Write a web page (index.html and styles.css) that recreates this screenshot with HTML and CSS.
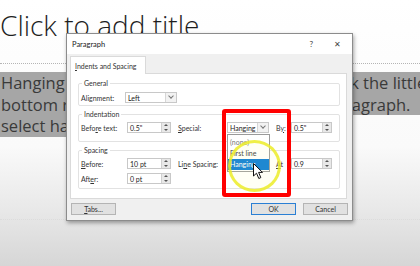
FILE: index.html
```html
<!DOCTYPE html>
<html lang="en">
<head>
  <meta charset="UTF-8">
  <title>Paragraph</title>
  <link rel="stylesheet" href="styles.css">
</head>
<body>
  <!-- slide behind the dialog -->
  <div class="slide">
    <div class="title-ph">
      <h1 class="title">Click to add title</h1>
    </div>
    <div class="body-ph">
      <div class="line full">
        <span class="seg-left">Hanging indent lets a list line up when you</span>
        <span class="seg-right">click the little</span>
      </div>
      <div class="line full">
        <span class="seg-left">bottom right arrow of the group called</span>
        <span class="seg-right">Paragraph.</span>
      </div>
      <div class="line short">select hanging from the special box.</div>
    </div>
  </div>

  <!-- Paragraph dialog -->
  <div class="dialog">
    <div class="titlebar">
      <span class="dlg-title">Paragraph</span>
      <span class="tb-btn">?</span>
      <span class="tb-btn close">✕</span>
    </div>

    <div class="tabs">
      <div class="tab active"><u>I</u>ndents and Spacing</div>
    </div>

    <div class="panel">
      <div class="group">
        <div class="legend">General</div>
        <div class="row row-align">
          <span class="lbl">Ali<u>g</u>nment:</span>
          <div class="combo wide"><span>Left</span><i class="arrow"></i></div>
        </div>
      </div>

      <div class="group mid">
        <div class="legend">Indentation</div>
        <div class="row">
          <span class="lbl">Befo<u>r</u>e text:</span>
          <div class="spin"><span>0.5"</span><i class="spinner"></i></div>
          <span class="lbl pad"><u>S</u>pecial:</span>
          <div class="combo"><span>Hanging</span><i class="arrow"></i></div>
          <span class="lbl pad">B<u>y</u>:</span>
          <div class="spin"><span>0.5"</span><i class="spinner"></i></div>
        </div>
      </div>

      <div class="group last">
        <div class="legend">Spacing</div>
        <div class="row">
          <span class="lbl"><u>B</u>efore:</span>
          <div class="spin"><span>10 pt</span><i class="spinner"></i></div>
          <span class="lbl pad">Li<u>n</u>e Spacing:</span>
          <div class="combo"><span>Multiple</span><i class="arrow"></i></div>
          <span class="lbl pad"><u>A</u>t</span>
          <div class="spin"><span>0.9</span><i class="spinner"></i></div>
        </div>
        <div class="row">
          <span class="lbl">Aft<u>e</u>r:</span>
          <div class="spin"><span>0 pt</span><i class="spinner"></i></div>
        </div>
      </div>
    </div>

    <div class="footer">
      <button class="btn"><u>T</u>abs...</button>
      <span class="spacer"></span>
      <button class="btn default">OK</button>
      <button class="btn">Cancel</button>
    </div>

    <!-- open list of the Special combo -->
    <ul class="droplist">
      <li class="muted">(none)</li>
      <li>First line</li>
      <li class="selected">Hanging</li>
    </ul>
  </div>

  <!-- video annotations -->
  <div class="mark-box"></div>
  <div class="mark-ring"></div>
  <svg class="cursor" width="11" height="17" viewBox="0 0 11 17">
    <path d="M0.5 0.5 L0.5 13 L3.5 10.2 L5.8 15.5 L7.8 14.6 L5.6 9.4 L9.5 9.4 Z" fill="#fff" stroke="#111" stroke-width="1" stroke-linejoin="round"/>
  </svg>
</body>
</html>
```

FILE: styles.css
```css
* {
  box-sizing: border-box;
}

body {
  margin: 0;
  width: 420px;
  height: 266px;
  overflow: hidden;
  position: relative;
  font-family: "Open Sans", "Noto Sans", sans-serif;
  color: #222;
}

/* slide */
.slide {
  height: 266px;
  background: linear-gradient(to bottom, #ffffff 0, #fafafa 55%, #e9e9e9 78%, #d6d6d6 100%);
}

.title-ph {
  height: 64px;
  padding-top: 10px;
  border-bottom: 1px dotted #b5b5b5;
}

.title {
  margin: 0;
  font-size: 28px;
  font-weight: 300;
  line-height: 31px;
  color: #1e1e1e;
  white-space: nowrap;
}

.body-ph {
  height: 156px;
  padding-top: 8px;
  border-bottom: 1px dotted #dcdcdc;
}

.line {
  font-size: 16.5px;
  line-height: 21.5px;
  white-space: nowrap;
  overflow: hidden;
  background: #a6a6a6;
  color: #3a3a3a;
  padding-left: 1px;
}

.line.full {
  display: flex;
}

.line.short {
  width: 200px;
}

.seg-left {
  flex: 0 0 325px;
  overflow: hidden;
}

/* dialog window */
.dialog {
  position: absolute;
  left: 66px;
  top: 33px;
  width: 287px;
  height: 188px;
  background: #f0f0f0;
  border: 1px solid #8c8c8c;
  box-shadow: 1px 2px 4px rgba(0, 0, 0, 0.35);
  font-family: Lato, "Noto Sans", sans-serif;
  font-size: 7px;
  color: #333;
  display: flex;
  flex-direction: column;
}

.titlebar {
  height: 20px;
  background: #fff;
  display: flex;
  align-items: center;
  padding: 0 11px 0 5px;
  gap: 21px;
}

.dlg-title {
  flex: 1;
  font-size: 7.5px;
  color: #222;
}

.tb-btn {
  font-size: 8px;
  color: #444;
}

.tabs {
  display: flex;
  padding: 1px 0 0 3px;
  height: 19px;
}

.tab {
  background: #fff;
  border: 1px solid #dadada;
  border-bottom: none;
  padding: 5px 3px 0 4px;
  width: 76px;
  white-space: nowrap;
  position: relative;
  top: 1px;
}

.panel {
  height: 126px;
  margin: 0 5px 0 3px;
  background: #fff;
  border: 1px solid #dadada;
  padding: 9px 6px 0 7px;
  display: flex;
  flex-direction: column;
  gap: 8px;
}

.group {
  position: relative;
  border: 1px solid #e2e2e2;
  border-radius: 2px;
  padding: 8px 2px 2px 2px;
  display: flex;
  flex-direction: column;
  gap: 4px;
}

.group.mid {
  padding: 7px 2px 8px 2px;
}

.group.last {
  padding: 7px 2px 4px 2px;
}

.legend {
  position: absolute;
  top: -6px;
  left: 3px;
  background: #fff;
  padding: 0 2px;
  line-height: 10px;
  color: #333;
}

.row {
  display: grid;
  grid-template-columns: 46px 44px 56px 42px 22px 41px;
  align-items: center;
  height: 11px;
  white-space: nowrap;
}

.row-align {
  grid-template-columns: 44px 52px;
}

.lbl.pad {
  padding-left: 7px;
}

.spin,
.combo {
  height: 11px;
  background: #fff;
  border: 1px solid #c8c8c8;
  display: flex;
  align-items: center;
  padding-left: 2px;
  color: #222;
  overflow: hidden;
}

.spin span,
.combo span {
  flex: 1;
}

.spinner {
  flex: 0 0 9px;
  height: 9px;
  background: #e8e8e8;
  border-left: 1px solid #d0d0d0;
  position: relative;
}

.spinner::before,
.spinner::after {
  content: "";
  position: absolute;
  left: 2px;
  border-left: 2px solid transparent;
  border-right: 2px solid transparent;
}

.spinner::before {
  top: 1px;
  border-bottom: 2px solid #555;
}

.spinner::after {
  bottom: 1px;
  border-top: 2px solid #555;
}

.arrow {
  flex: 0 0 11px;
  height: 9px;
  background: #f2f2f2;
  border-left: 1px solid #d6d6d6;
  position: relative;
}

.arrow::after {
  content: "";
  position: absolute;
  left: 3px;
  top: 1px;
  width: 3px;
  height: 3px;
  border-right: 1px solid #777;
  border-bottom: 1px solid #777;
  transform: rotate(45deg);
}

.footer {
  flex: 1;
  display: flex;
  align-items: center;
  padding: 0 4px 1px 4px;
  gap: 7px;
}

.spacer {
  flex: 1;
}

.btn {
  width: 45px;
  height: 12px;
  padding: 0;
  font: inherit;
  color: #333;
  background: #e1e1e1;
  border: 1px solid #b4b4b4;
}

.btn.default {
  border: 1px solid #2a7fd4;
}

.droplist {
  position: absolute;
  left: 160px;
  top: 100px;
  width: 43px;
  margin: 0;
  padding: 2px 0 1px;
  list-style: none;
  background: #fff;
  border: 1px solid #9a9a9a;
}

.droplist li {
  height: 11px;
  line-height: 11px;
  padding-left: 2px;
  color: #333;
}

.droplist li.muted {
  color: #777;
}

.droplist li.selected {
  background: #0078d7;
  color: #fff;
}

/* annotations drawn over the video */
.mark-box {
  position: absolute;
  left: 222px;
  top: 109px;
  width: 69px;
  height: 88px;
  border: 4px solid #ff0000;
  border-radius: 3px;
}

.mark-ring {
  position: absolute;
  left: 228px;
  top: 140px;
  width: 53px;
  height: 52px;
  border: 3px solid rgba(236, 236, 40, 0.85);
  border-radius: 50%;
  background: rgba(255, 255, 170, 0.12);
}

.cursor {
  position: absolute;
  left: 253px;
  top: 163px;
}
```
